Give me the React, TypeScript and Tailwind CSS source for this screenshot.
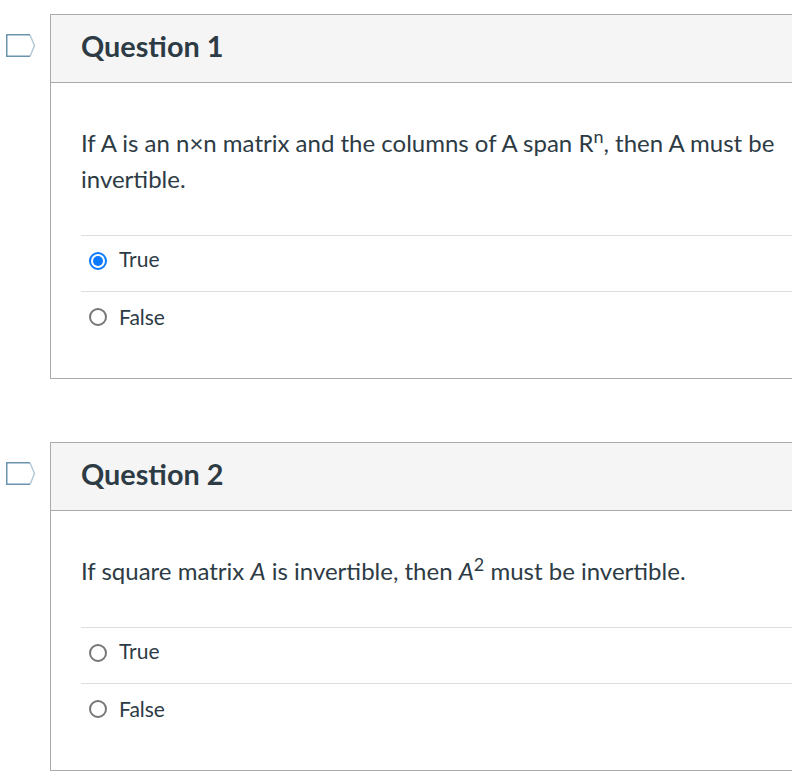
import { ReactNode } from 'react'

interface QuestionProps {
  title: string
  selected?: string
  textClass: string
  children: ReactNode
}

function Flag() {
  return (
    <svg width="30" height="24" viewBox="0 0 30 24" className="mt-[20px] ml-[6px] shrink-0" fill="none">
      <path d="M24 1 L28.5 11.5 L24 22.5" stroke="#b4cad9" strokeWidth="1.5" />
      <path d="M24 0.75 H0.75 V22.25 H24" stroke="#6a93b0" strokeWidth="1.5" />
    </svg>
  )
}

function Radio({ checked }: { checked: boolean }) {
  if (checked) {
    return (
      <span className="mt-[2px] flex h-[18px] w-[18px] items-center justify-center rounded-full border-2 border-[#0b7aff] bg-white">
        <span className="h-[10px] w-[10px] rounded-full bg-[#0b7aff]" />
      </span>
    )
  }
  return <span className="mt-[2px] h-[18px] w-[18px] rounded-full border-2 border-[#767676] bg-white" />
}

function Answer({ label, checked, labelClass }: { label: string; checked: boolean; labelClass: string }) {
  return (
    <div className="flex h-[56px] items-center border-t border-[#dddddd] pb-[7px] pl-[8px]">
      <Radio checked={checked} />
      <span className={`ml-[12px] text-[21px] text-[#2d3b45] ${labelClass}`}>{label}</span>
    </div>
  )
}

function Question({ title, selected, textClass, children }: QuestionProps) {
  return (
    <div className="flex">
      <div className="w-[50px] shrink-0">
        <Flag />
      </div>
      <div className="flex-1 border-y border-l border-[#aaaaaa]">
        <div className="flex h-[68px] items-center border-b border-[#aaaaaa] bg-[#f5f5f5] pb-[4px] pl-[30px]">
          <h2 className="text-[28.8px] font-bold text-[#2d3b45]">{title}</h2>
        </div>
        <div className="pl-[30px] pb-[31px]">
          <div className={`text-[24px] leading-[36px] text-[#2d3b45] ${textClass}`}>{children}</div>
          <Answer label="True" checked={selected === 'True'} labelClass="pb-[2px]" />
          <Answer label="False" checked={selected === 'False'} labelClass="pt-[2px]" />
        </div>
      </div>
    </div>
  )
}

export default function App() {
  return (
    <div className="h-[775px] w-[792px] overflow-hidden bg-white pt-[14px] font-['Lato',sans-serif]">
      <div className="flex flex-col gap-[63px]">
        <Question title="Question 1" selected="True" textClass="pt-[42px] pb-[38px] pr-[10px]">
          If A is an n×n matrix and the columns of A span R<sup>n</sup>, then A must be invertible.
        </Question>
        <Question title="Question 2" textClass="pt-[42px] pb-[38px]">
          If square matrix <em>A</em> is invertible, then <em>A</em>
          <sup>2</sup> must be invertible.
        </Question>
      </div>
    </div>
  )
}
